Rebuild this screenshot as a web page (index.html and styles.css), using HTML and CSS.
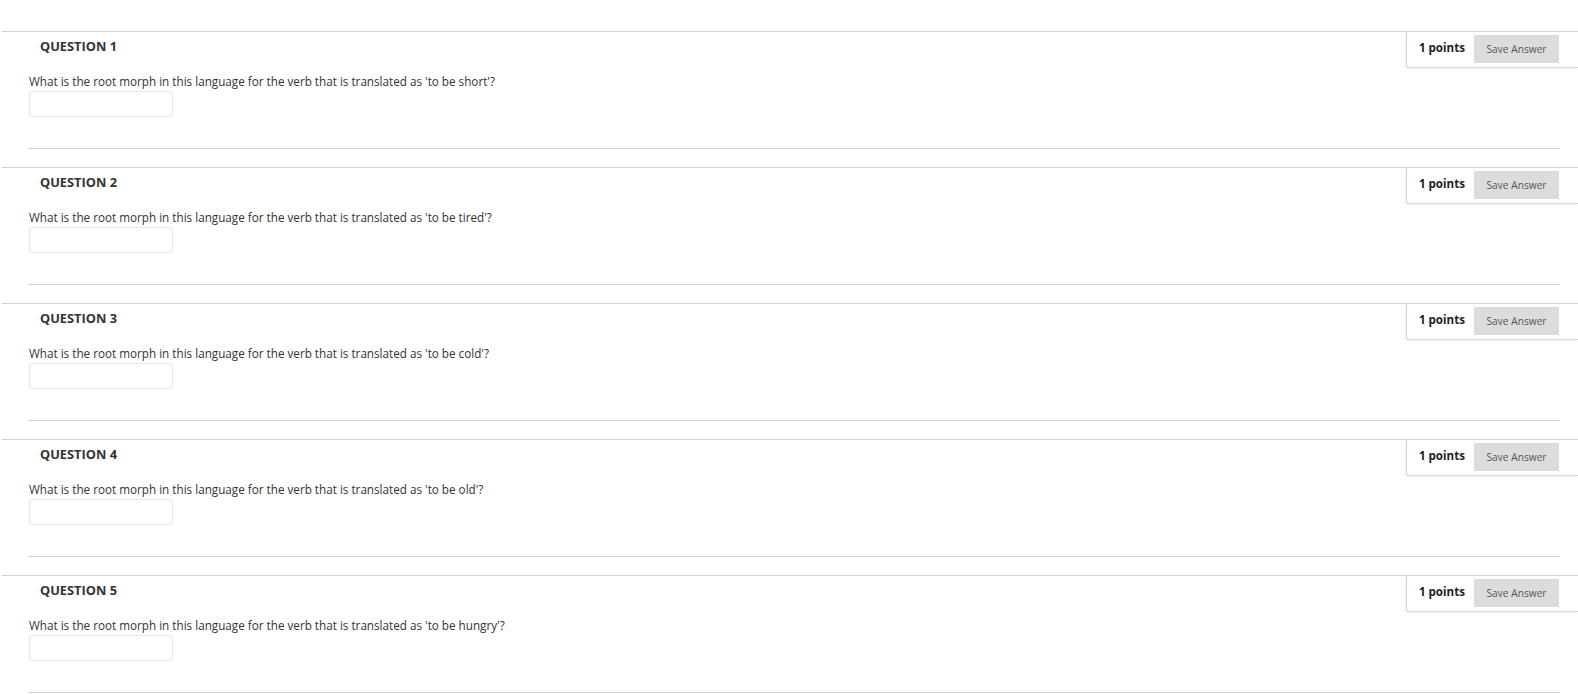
FILE: index.html
```html
<!DOCTYPE html>
<html lang="en">
<head>
<meta charset="utf-8">
<title>Questions</title>
<link rel="stylesheet" href="styles.css">
</head>
<body>
<main class="quiz">
  <section class="question">
    <div class="q-head">
      <h3 class="q-title">QUESTION 1</h3>
      <div class="points"><span class="pts">1 points</span><button class="save" type="button">Save Answer</button></div>
    </div>
    <div class="q-body">
      <p class="q-text">What is the root morph in this language for the verb that is translated as 'to be short'?</p>
      <input class="answer" type="text">
    </div>
  </section>
  <section class="question">
    <div class="q-head">
      <h3 class="q-title">QUESTION 2</h3>
      <div class="points"><span class="pts">1 points</span><button class="save" type="button">Save Answer</button></div>
    </div>
    <div class="q-body">
      <p class="q-text">What is the root morph in this language for the verb that is translated as 'to be tired'?</p>
      <input class="answer" type="text">
    </div>
  </section>
  <section class="question">
    <div class="q-head">
      <h3 class="q-title">QUESTION 3</h3>
      <div class="points"><span class="pts">1 points</span><button class="save" type="button">Save Answer</button></div>
    </div>
    <div class="q-body">
      <p class="q-text">What is the root morph in this language for the verb that is translated as 'to be cold'?</p>
      <input class="answer" type="text">
    </div>
  </section>
  <section class="question">
    <div class="q-head">
      <h3 class="q-title">QUESTION 4</h3>
      <div class="points"><span class="pts">1 points</span><button class="save" type="button">Save Answer</button></div>
    </div>
    <div class="q-body">
      <p class="q-text">What is the root morph in this language for the verb that is translated as 'to be old'?</p>
      <input class="answer" type="text">
    </div>
  </section>
  <section class="question">
    <div class="q-head">
      <h3 class="q-title">QUESTION 5</h3>
      <div class="points"><span class="pts">1 points</span><button class="save" type="button">Save Answer</button></div>
    </div>
    <div class="q-body">
      <p class="q-text">What is the root morph in this language for the verb that is translated as 'to be hungry'?</p>
      <input class="answer" type="text">
    </div>
  </section>
</main>
</body>
</html>
```

FILE: styles.css
```css
html, body {
  margin: 0;
  padding: 0;
  background: #fff;
}
body {
  font-family: "Open Sans", "Noto Sans", "DejaVu Sans", sans-serif;
  color: #333;
  overflow: hidden;
}
.quiz {
  padding-top: 31px;
}
.question {
  margin-left: 2px;
  border-top: 1px solid #d2d2d2;
  margin-bottom: 18px;
}
.q-head {
  display: flex;
  justify-content: space-between;
  align-items: flex-start;
}
.q-title {
  margin: 0;
  padding: 5px 0 0 38px;
  font-size: 12.8px;
  line-height: 18px;
  font-weight: 700;
  color: #333;
}
.points {
  display: flex;
  align-items: center;
  gap: 9px;
  padding: 3px 19px 4px 12px;
  border-left: 1px solid #d6d6d6;
  border-bottom: 1px solid #d6d6d6;
  border-bottom-left-radius: 3px;
  box-shadow: -1px 1px 2px rgba(0, 0, 0, 0.06);
}
.pts {
  font-size: 11.6px;
  font-weight: 700;
  color: #222;
  white-space: nowrap;
  padding-bottom: 4px;
}
.save {
  width: 85px;
  height: 28px;
  border: none;
  border-radius: 0;
  background: #dcdcdc;
  color: #555;
  font-family: "Open Sans", "Noto Sans", sans-serif;
  font-size: 10.2px;
  padding: 0;
  cursor: pointer;
}
.q-body {
  margin-right: 18px;
  margin-left: 27px;
  padding-bottom: 31px;
  border-bottom: 1px solid #d2d2d2;
  display: flex;
  flex-direction: column;
  align-items: flex-start;
}
.q-text {
  margin: 6px 0 2px;
  font-size: 11.7px;
  line-height: 15px;
  color: #333;
}
.answer {
  box-sizing: border-box;
  width: 144px;
  height: 26px;
  margin: 0;
  border: 1px solid #e2e2e2;
  border-radius: 3px;
  background: #fff;
  padding: 0 6px;
}
```
